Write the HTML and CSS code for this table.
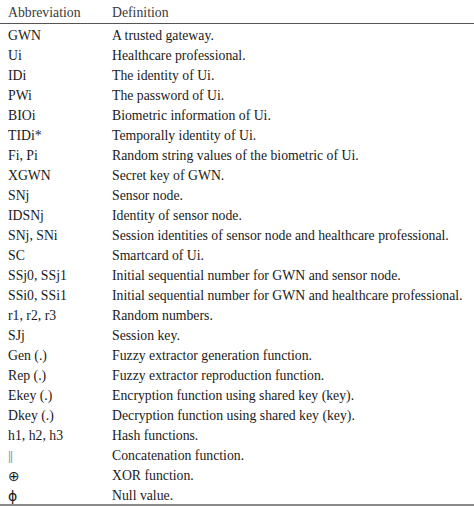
FILE: index.html
```html
<!DOCTYPE html>
<html>
<head>
<meta charset="utf-8">
<link rel="stylesheet" href="styles.css">
</head>
<body>
<div class="table">
  <div class="row head"><span>Abbreviation</span><span>Definition</span></div>
  <div class="rows">
    <div class="row"><span>GWN</span><span>A trusted gateway.</span></div>
    <div class="row"><span>Ui</span><span>Healthcare professional.</span></div>
    <div class="row"><span>IDi</span><span>The identity of Ui.</span></div>
    <div class="row"><span>PWi</span><span>The password of Ui.</span></div>
    <div class="row"><span>BIOi</span><span>Biometric information of Ui.</span></div>
    <div class="row"><span>TIDi*</span><span>Temporally identity of Ui.</span></div>
    <div class="row"><span>Fi, Pi</span><span>Random string values of the biometric of Ui.</span></div>
    <div class="row"><span>XGWN</span><span>Secret key of GWN.</span></div>
    <div class="row"><span>SNj</span><span>Sensor node.</span></div>
    <div class="row"><span>IDSNj</span><span>Identity of sensor node.</span></div>
    <div class="row"><span>SNj, SNi</span><span>Session identities of sensor node and healthcare professional.</span></div>
    <div class="row"><span>SC</span><span>Smartcard of Ui.</span></div>
    <div class="row"><span>SSj0, SSj1</span><span>Initial sequential number for GWN and sensor node.</span></div>
    <div class="row"><span>SSi0, SSi1</span><span>Initial sequential number for GWN and healthcare professional.</span></div>
    <div class="row"><span>r1, r2, r3</span><span>Random numbers.</span></div>
    <div class="row"><span>SJj</span><span>Session key.</span></div>
    <div class="row"><span>Gen (.)</span><span>Fuzzy extractor generation function.</span></div>
    <div class="row"><span>Rep (.)</span><span>Fuzzy extractor reproduction function.</span></div>
    <div class="row"><span>Ekey (.)</span><span>Encryption function using shared key (key).</span></div>
    <div class="row"><span>Dkey (.)</span><span>Decryption function using shared key (key).</span></div>
    <div class="row"><span>h1, h2, h3</span><span>Hash functions.</span></div>
    <div class="row"><span class="sym bars">||</span><span>Concatenation function.</span></div>
    <div class="row"><span class="sym">⊕</span><span>XOR function.</span></div>
    <div class="row"><span class="sym">ϕ</span><span>Null value.</span></div>
  </div>
</div>
</body>
</html>
```
FILE: styles.css
```css
html, body {
  margin: 0;
  padding: 0;
  background: #fff;
}
.table {
  width: 474px;
  height: 506px;
  box-sizing: border-box;
  padding-top: 3px;
  border-bottom: 2px solid #8a8a8a;
  font-family: "Liberation Serif", "Times New Roman", serif;
  font-size: 13.75px;
  color: #1a1a1a;
  overflow: hidden;
}
.rows {
  padding-top: 2px;
}
.row {
  display: grid;
  grid-template-columns: 104px 1fr;
  padding-left: 8px;
  height: 20px;
  line-height: 20px;
  white-space: nowrap;
}
.head {
  color: #3a3a3a;
  border-bottom: 1px solid #555;
}
.sym {
  font-family: "DejaVu Sans", sans-serif;
  font-size: 14px;
}
.bars {
  color: #9a9a9a;
  font-family: "Liberation Sans", sans-serif;
  font-size: 12px;
  letter-spacing: -1px;
}
```
